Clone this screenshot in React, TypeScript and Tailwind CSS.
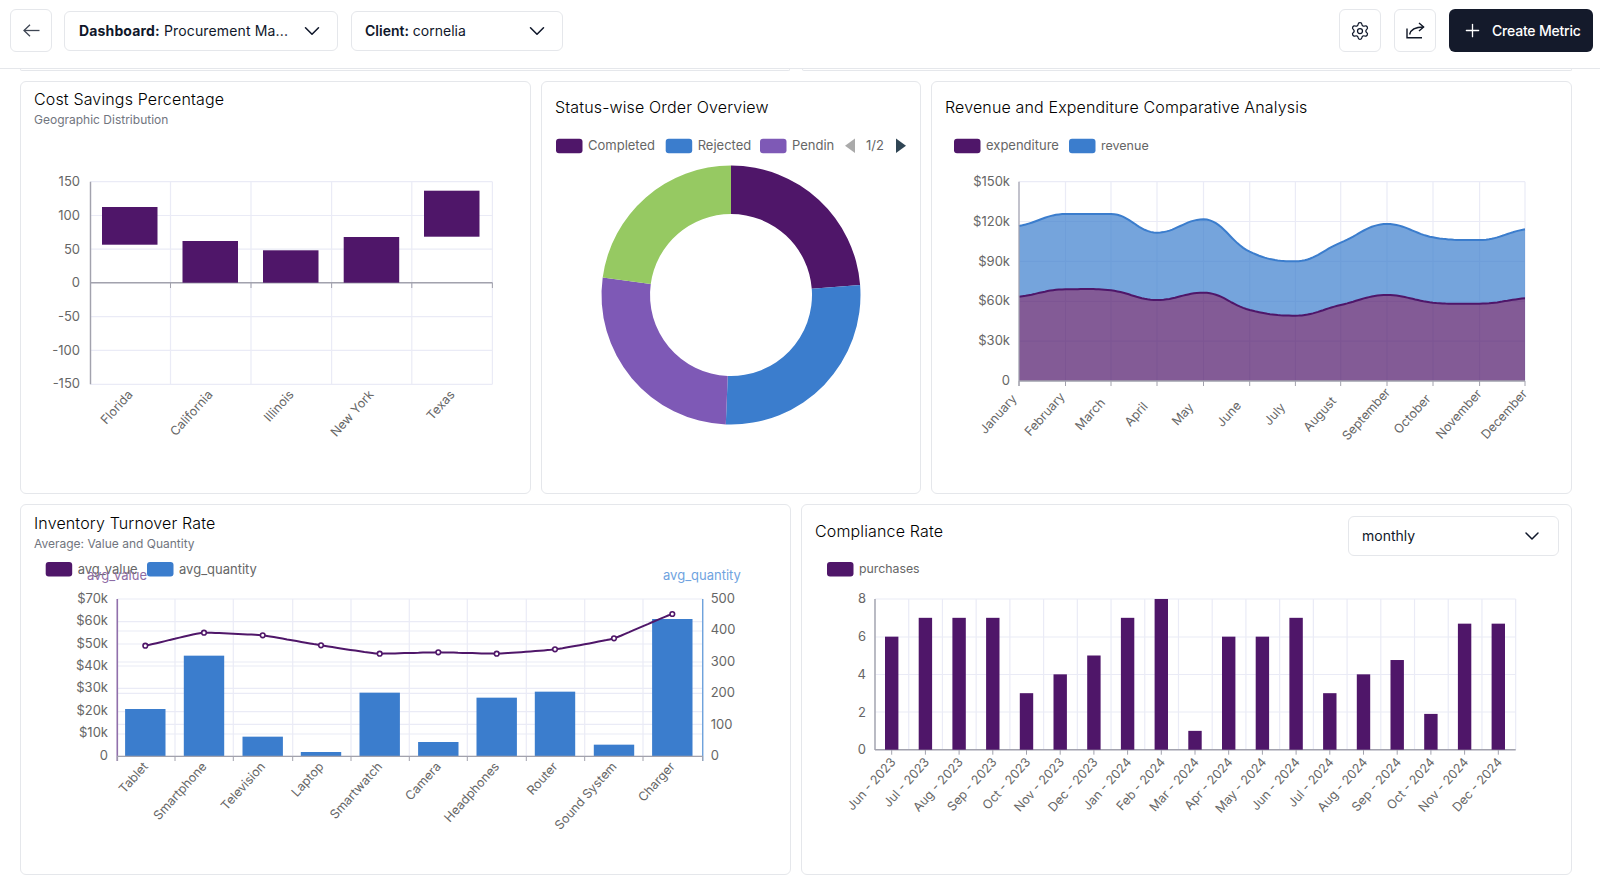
import { ChevronDown, Plus, Settings } from "lucide-react"

const PURPLE = "#4f1669"
const BLUE = "#3b7dcd"
const VIOLET = "#7e59b6"
const GREEN = "#96c962"
const GRID = "#eaebf6"
const AXIS = "#a2a2ad"
const LABEL = "#666666"

type Pt = [number, number]

// monotone-ish smoothing, sampled so areas can be closed against another curve
function smooth(points: Pt[], k = 0.4): Pt[] {
  const slopes = points.map((p, i) => {
    const prev = points[i - 1]
    const next = points[i + 1]
    if (!prev) return ((next[1] - p[1]) / (next[0] - p[0])) * 0.7
    if (!next) return ((p[1] - prev[1]) / (p[0] - prev[0])) * 0.7
    if ((p[1] - prev[1]) * (next[1] - p[1]) <= 0) return 0
    return (next[1] - prev[1]) / (next[0] - prev[0])
  })
  const out: Pt[] = []
  for (let i = 0; i < points.length - 1; i++) {
    const [x0, y0] = points[i]
    const [x1, y1] = points[i + 1]
    const dx = x1 - x0
    const c1y = y0 + slopes[i] * dx * k
    const c2y = y1 - slopes[i + 1] * dx * k
    for (let s = 0; s < 16; s++) {
      const t = s / 16
      const u = 1 - t
      out.push([
        x0 + dx * (3 * u * u * t * k + 3 * u * t * t * (1 - k) + t * t * t),
        u * u * u * y0 + 3 * u * u * t * c1y + 3 * u * t * t * c2y + t * t * t * y1,
      ])
    }
  }
  out.push(points[points.length - 1])
  return out
}

const toPath = (pts: Pt[]) => pts.map((p, i) => `${i ? "L" : "M"}${p[0].toFixed(1)} ${p[1].toFixed(1)}`).join(" ")

function LegendItem({ x, y, label, color, size = 13 }: { x: number; y: number; label: string; color: string; size?: number }) {
  return (
    <g>
      <rect x={x} y={y} width={26.5} height={14.5} rx={3} fill={color} />
      <text x={x + 32} y={y + 6.5} fontSize={size} fill={LABEL} dominantBaseline="central">
        {label}
      </text>
    </g>
  )
}

function GridLines({ xs, ys, x0, x1, y0, y1 }: { xs: number[]; ys: number[]; x0: number; x1: number; y0: number; y1: number }) {
  return (
    <g stroke={GRID} strokeWidth={1.2}>
      {xs.map((x) => (
        <line key={x} x1={x} x2={x} y1={y0} y2={y1} />
      ))}
      {ys.map((y) => (
        <line key={y} x1={x0} x2={x1} y1={y} y2={y} />
      ))}
    </g>
  )
}

function YLabels({ x, items, anchor = "end" }: { x: number; items: [string, number][]; anchor?: "end" | "start" }) {
  return (
    <g fontSize={13} fill={LABEL} textAnchor={anchor} dominantBaseline="central">
      {items.map(([t, y]) => (
        <text key={t} x={x} y={y}>
          {t}
        </text>
      ))}
    </g>
  )
}

function XLabels({ items, y, anchor = "end" }: { items: [string, number][]; y: number; anchor?: "end" | "middle" }) {
  return (
    <g fontSize={12.5} fill={LABEL} textAnchor={anchor} dominantBaseline="central">
      {items.map(([t, x]) => (
        <text key={t} x={x} y={y} transform={`rotate(-48 ${x} ${y})`}>
          {t}
        </text>
      ))}
    </g>
  )
}

function CostSavingsChart() {
  const xs = [90.5, 170.5, 251, 331.6, 411.8, 492.4]
  const ys = [181.7, 215.5, 249.2, 282.7, 316.6, 350.4, 384.3]
  const bars = [
    { x: 102, top: 207, bottom: 244.7 },
    { x: 182.5, top: 241, bottom: 282.7 },
    { x: 263, top: 250.3, bottom: 282.7 },
    { x: 343.7, top: 237, bottom: 282.7 },
    { x: 424, top: 190.7, bottom: 236.7 },
  ]
  return (
    <svg className="block" width={509} height={363} viewBox="21 130 509 363">
      <GridLines xs={xs} ys={ys} x0={90.5} x1={492.4} y0={181.7} y1={384.3} />
      <line x1={90.5} x2={90.5} y1={181.7} y2={384.3} stroke={AXIS} strokeWidth={1.4} />
      <line x1={90} x2={492.4} y1={282.7} y2={282.7} stroke={AXIS} strokeWidth={1.4} />
      {xs.map((x) => (
        <line key={x} x1={x} x2={x} y1={282.7} y2={288} stroke={AXIS} />
      ))}
      {bars.map((b) => (
        <rect key={b.x} x={b.x} y={b.top} width={55.5} height={b.bottom - b.top} fill={PURPLE} />
      ))}
      <YLabels
        x={80}
        items={[["150", 181], ["100", 214.5], ["50", 248.5], ["0", 282], ["-50", 315.5], ["-100", 349.5], ["-150", 383]]}
      />
      <XLabels y={392} items={[["Florida", 130], ["California", 210], ["Illinois", 291], ["New York", 371], ["Texas", 452]]} />
    </svg>
  )
}

function polar(r: number, deg: number): Pt {
  const a = (deg * Math.PI) / 180
  return [731 + r * Math.sin(a), 295 - r * Math.cos(a)]
}

function slice(from: number, to: number) {
  const R = 129.5
  const r = 81
  const a = polar(R, from)
  const b = polar(R, to)
  const c = polar(r, to)
  const d = polar(r, from)
  return `M${a[0]} ${a[1]} A${R} ${R} 0 0 1 ${b[0]} ${b[1]} L${c[0]} ${c[1]} A${r} ${r} 0 0 0 ${d[0]} ${d[1]} Z`
}

function StatusChart() {
  return (
    <svg className="block" width={378} height={363} viewBox="542 130 378 363">
      <LegendItem x={556} y={138.7} label="Completed" color={PURPLE} />
      <LegendItem x={665.7} y={138.7} label="Rejected" color={BLUE} />
      <LegendItem x={760} y={138.7} label="Pendin" color={VIOLET} />
      <path d="M855 138.5V153L845 145.7Z" fill="#aaaaaa" />
      <text x={875} y={145} fontSize={13} fill={LABEL} textAnchor="middle" dominantBaseline="central">
        1/2
      </text>
      <path d="M896 138.5V153L906 145.7Z" fill="#2f4554" />
      <path d={slice(0, 85.6)} fill={PURPLE} />
      <path d={slice(85.6, 182.3)} fill={BLUE} />
      <path d={slice(182.3, 277.8)} fill={VIOLET} />
      <path d={slice(277.8, 360)} fill={GREEN} />
    </svg>
  )
}

function RevenueChart() {
  const xs = [1019, 1065.5, 1111, 1157, 1203.5, 1249.7, 1295.4, 1340.7, 1387, 1433, 1479.6, 1525]
  const ys = [181.7, 221.5, 261.4, 301.3, 341.2, 381]
  const revenue = [408, 372, 372, 428, 388, 485, 514, 458, 402, 442, 450, 418]
  const expenditure = [620, 598, 601, 630, 608, 660, 677, 645, 615, 638, 641, 625]
  const top = smooth(xs.map((x, i) => [x, 90 + revenue[i] / 3] as Pt))
  const mid = smooth(xs.map((x, i) => [x, 90 + expenditure[i] / 3] as Pt))
  const months = ["January", "February", "March", "April", "May", "June", "July", "August", "September", "October", "November", "December"]
  return (
    <svg className="block" width={639} height={363} viewBox="932 130 639 363">
      <LegendItem x={954} y={138.7} label="expenditure" color={PURPLE} />
      <LegendItem x={1069} y={138.7} label="revenue" color={BLUE} size={12.5} />
      <GridLines xs={xs} ys={ys} x0={1019} x1={1525} y0={181.7} y1={381} />
      <path d={`${toPath(top)} L${toPath([...mid].reverse()).slice(1)} Z`} fill={BLUE} opacity={0.7} />
      <path d={`${toPath(mid)} L1525 381 L1019 381 Z`} fill={PURPLE} opacity={0.7} />
      <path d={toPath(top)} fill="none" stroke={BLUE} strokeWidth={2} />
      <path d={toPath(mid)} fill="none" stroke={PURPLE} strokeWidth={2} />
      <line x1={1019} x2={1019} y1={181.7} y2={386} stroke={AXIS} strokeWidth={1.2} />
      <line x1={1019} x2={1525} y1={381} y2={381} stroke={AXIS} strokeWidth={1.4} />
      {xs.map((x) => (
        <line key={x} x1={x} x2={x} y1={381} y2={386} stroke={AXIS} />
      ))}
      <YLabels
        x={1010}
        items={[["$150k", 180.5], ["$120k", 220.5], ["$90k", 260.5], ["$60k", 300], ["$30k", 340], ["0", 380]]}
      />
      {/* this chart's labels pivot on their middle, not their end */}
      <XLabels y={414} anchor="middle" items={months.map((m, i) => [m, xs[i] - 21] as [string, number])} />
    </svg>
  )
}

function InventoryChart() {
  const xs = [117.3, 175, 233.3, 292.7, 351, 409.3, 467.3, 526.3, 584.7, 643, 702.7]
  const ys = [599, 621.7, 644, 666, 688.3, 711.7, 734, 756.3, 631, 662, 693.3, 724.3]
  const names = ["Tablet", "Smartphone", "Television", "Laptop", "Smartwatch", "Camera", "Headphones", "Router", "Sound System", "Charger"]
  const centers = [145.3, 204, 262.7, 321, 379.7, 438.3, 496.7, 555, 614, 672.3]
  const tops = [627, 467, 710, 756, 578, 726, 593, 575, 734, 357]
  const line = [437, 398, 406, 436, 461, 457, 461, 448, 415, 342]
  const pts = centers.map((x, i) => [x, 500 + line[i] / 3] as Pt)
  return (
    <svg className="block" width={769} height={320} viewBox="21 555 769 320">
      <LegendItem x={45.7} y={562} label="avg_value" color={PURPLE} />
      <LegendItem x={147} y={562} label="avg_quantity" color={BLUE} />
      <text x={87} y={575} fontSize={13} fill="#8d6ca5" dominantBaseline="central">
        avg_value
      </text>
      <text x={663} y={575} fontSize={13} fill="#6fa3e0" dominantBaseline="central">
        avg_quantity
      </text>
      <GridLines xs={xs} ys={ys} x0={117.3} x1={702.7} y0={599} y1={756.3} />
      {centers.map((x, i) => (
        <rect key={x} x={x - 20.2} y={500 + tops[i] / 3} width={40.4} height={756.3 - (500 + tops[i] / 3)} fill={BLUE} />
      ))}
      <line x1={117.3} x2={117.3} y1={599} y2={761} stroke="#9170ab" strokeWidth={1.6} />
      <line x1={702.7} x2={702.7} y1={599} y2={761} stroke="#6fa3dc" strokeWidth={1.4} />
      <line x1={117} x2={703} y1={756.3} y2={756.3} stroke={AXIS} strokeWidth={1.2} />
      {xs.map((x) => (
        <line key={x} x1={x} x2={x} y1={756.3} y2={761} stroke={AXIS} />
      ))}
      <path d={toPath(smooth(pts, 0.12))} fill="none" stroke={PURPLE} strokeWidth={2} />
      {pts.map((p) => (
        <circle key={p[0]} cx={p[0]} cy={p[1]} r={2.3} fill="#ffffff" stroke={PURPLE} strokeWidth={1.6} />
      ))}
      <YLabels
        x={108}
        items={[["$70k", 597.5], ["$60k", 619.5], ["$50k", 642.5], ["$40k", 664.5], ["$30k", 687], ["$20k", 709.5], ["$10k", 731.5], ["0", 754.5]]}
      />
      <YLabels
        x={710.7}
        anchor="start"
        items={[["500", 597.5], ["400", 629], ["300", 660.5], ["200", 692], ["100", 723.5], ["0", 754.5]]}
      />
      <XLabels y={764} items={names.map((n, i) => [n, centers[i]] as [string, number])} />
    </svg>
  )
}

function ComplianceChart() {
  const values = [6, 7, 7, 7, 3, 4, 5, 7, 8, 1, 6, 6, 7, 3, 4, 4.76, 1.9, 6.69, 6.69]
  const labels = [
    "Jun - 2023", "Jul - 2023", "Aug - 2023", "Sep - 2023", "Oct - 2023", "Nov - 2023", "Dec - 2023",
    "Jan - 2024", "Feb - 2024", "Mar - 2024", "Apr - 2024", "May - 2024", "Jun - 2024", "Jul - 2024",
    "Aug - 2024", "Sep - 2024", "Oct - 2024", "Nov - 2024", "Dec - 2024",
  ]
  const xs = [875, ...labels.map((_, i) => 875 + 33.72 * (i + 1))]
  const ys = [599, 637, 674.5, 712, 749.7]
  const base = 749.7
  return (
    <svg className="block" width={769} height={320} viewBox="802 555 769 320">
      <LegendItem x={827} y={562} label="purchases" color={PURPLE} size={12.3} />
      <GridLines xs={xs} ys={ys} x0={875} x1={1515.7} y0={599} y1={749.7} />
      <line x1={875} x2={875} y1={599} y2={750} stroke={AXIS} strokeWidth={1.4} />
      <line x1={875} x2={1515.7} y1={base} y2={base} stroke={AXIS} strokeWidth={1.4} />
      {labels.map((l, i) => {
        const cx = 891.7 + 33.7 * i
        return <line key={l} x1={cx} x2={cx} y1={base} y2={base + 5} stroke={AXIS} />
      })}
      {values.map((v, i) => (
        <rect key={i} x={885 + 33.7 * i} y={base - v * 18.84} width={13.4} height={v * 18.84} fill={PURPLE} />
      ))}
      <YLabels x={866} items={[["8", 597.5], ["6", 635.7], ["4", 673.7], ["2", 711.5], ["0", 748.7]]} />
      <XLabels y={759.5} items={labels.map((l, i) => [l, 893 + 33.7 * i] as [string, number])} />
    </svg>
  )
}

function Card({ className, children }: { className: string; children: React.ReactNode }) {
  return <div className={`overflow-hidden rounded-md border border-[#e5e7eb] bg-white ${className}`}>{children}</div>
}

function IconButton({ children, className = "" }: { children: React.ReactNode; className?: string }) {
  return (
    <button className={`flex h-[43px] w-[42px] items-center justify-center rounded-md border border-[#e5e7eb] bg-white ${className}`}>
      {children}
    </button>
  )
}

export default function App() {
  return (
    <div className="h-[881px] w-[1600px] overflow-hidden bg-white font-['Inter',sans-serif] text-[#0f172a]">
      {/* Header */}
      <div className="flex h-[69px] items-start border-b border-[#e5e7eb] pl-[10px] pr-[7px] pt-[9px]">
        <IconButton>
          <svg width="17" height="13" viewBox="0 0 17 13" fill="none" stroke="#3f4654" strokeWidth="1.3">
            <path d="M16.5 6.5H1" />
            <path d="M7 .7L1 6.5L7 12.3" />
          </svg>
        </IconButton>
        <div className="ml-[12px] mt-[2px] flex h-[40px] w-[274px] items-center justify-between rounded-md border border-[#e5e7eb] pl-[14px] pr-[12px] text-sm">
          <span className="truncate tracking-[0.15px]">
            <span className="font-bold">Dashboard:</span> Procurement Ma...
          </span>
          <ChevronDown className="h-[26px] w-[26px] shrink-0" strokeWidth={1.4} />
        </div>
        <div className="ml-[13px] mt-[2px] flex h-[40px] w-[212px] items-center justify-between rounded-md border border-[#e5e7eb] pl-[13px] pr-[12px] text-sm">
          <span>
            <span className="font-semibold">Client:</span> cornelia
          </span>
          <ChevronDown className="h-[26px] w-[26px]" strokeWidth={1.4} />
        </div>
        <IconButton className="ml-auto">
          <Settings className="h-5 w-5" strokeWidth={1.5} />
        </IconButton>
        <IconButton className="ml-[13px]">
          <svg width="19" height="17" viewBox="0 0 19 17" fill="none" stroke="#111827" strokeWidth="1.4">
            <path d="M1 6.5V15.8H16" />
            <path d="M3.6 12.5C4.6 7.8 9 5 17.5 5" />
            <path d="M13 1L17.6 5L13 9" />
          </svg>
        </IconButton>
        <button className="ml-[13px] flex h-[43px] w-[144px] items-center rounded-md bg-[#141a2b] pl-[13px] text-sm font-medium tracking-[-0.2px] text-white">
          <Plus className="mr-[9px] h-[21px] w-[21px]" strokeWidth={1.5} />
          Create Metric
        </button>
      </div>

      {/* Cards scrolled under the header */}
      <div className="flex h-[2px] gap-[12px] pl-[20px] pr-[28px]">
        <div className="w-[770px] rounded-b-md border-b border-x border-[#e5e7eb]" />
        <div className="w-[770px] rounded-b-md border-b border-x border-[#e5e7eb]" />
      </div>

      <div className="flex flex-col gap-[10px] pl-[20px] pr-[28px] pt-[10px]">
        <div className="flex h-[413px] gap-[10px]">
          <Card className="w-[511px]">
            <div className="h-[48px] pl-[13px] pt-[6px]">
              <div className="text-base font-light leading-[22px] tracking-[0.15px] text-black">Cost Savings Percentage</div>
              <div className="mt-px text-xs leading-[18px] text-[#71757e]">Geographic Distribution</div>
            </div>
            <CostSavingsChart />
          </Card>
          <Card className="w-[380px]">
            <div className="h-[48px] pl-[13px] pt-[14px] text-base font-light leading-[22px] tracking-[0.15px] text-black">Status-wise Order Overview</div>
            <StatusChart />
          </Card>
          <Card className="w-[641px]">
            <div className="h-[48px] pl-[13px] pt-[14px] text-base font-light leading-[22px] tracking-[0.15px] text-black">Revenue and Expenditure Comparative Analysis</div>
            <RevenueChart />
          </Card>
        </div>
        <div className="flex h-[371px] gap-[10px]">
          <Card className="w-[771px]">
            <div className="h-[50px] pl-[13px] pt-[7px]">
              <div className="text-base font-light leading-[22px] tracking-[0.15px] text-black">Inventory Turnover Rate</div>
              <div className="mt-px text-xs leading-[18px] text-[#71757e]">Average: Value and Quantity</div>
            </div>
            <InventoryChart />
          </Card>
          <Card className="w-[771px]">
            <div className="flex h-[50px] items-start justify-between pl-[13px] pr-[12px] pt-[11px]">
              <div className="pt-[4px] text-base font-light leading-[22px] tracking-[0.15px] text-black">Compliance Rate</div>
              <div className="flex h-[40px] w-[211px] items-center justify-between rounded-md border border-[#e5e7eb] pl-[13px] pr-[14px] text-sm">
                monthly
                <ChevronDown className="h-6 w-6" strokeWidth={1.5} />
              </div>
            </div>
            <ComplianceChart />
          </Card>
        </div>
      </div>
    </div>
  )
}
